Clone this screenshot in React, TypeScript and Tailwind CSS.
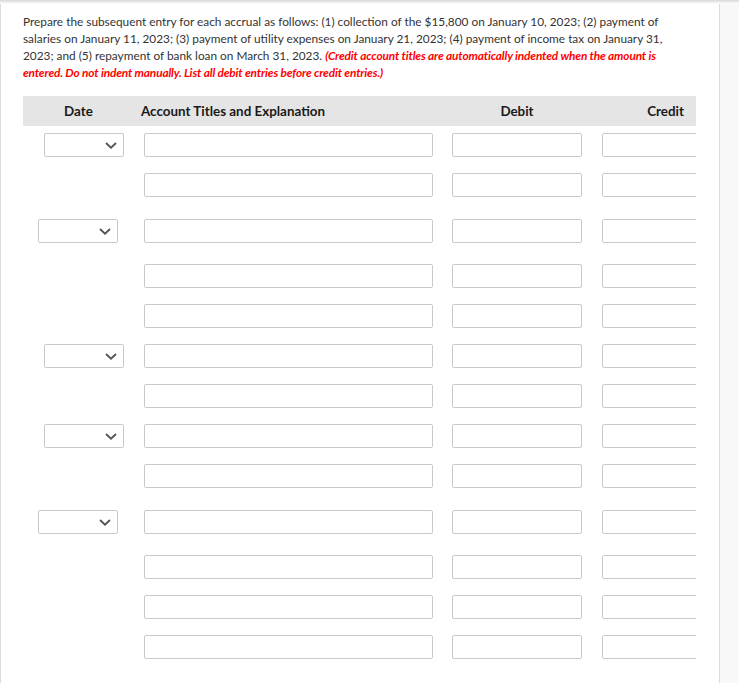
import React from "react";

type Row = { select?: "a" | "b"; extra?: boolean };

const rows: Row[] = [
  { select: "a" },
  {},
  { select: "b", extra: true },
  {},
  {},
  { select: "a" },
  {},
  { select: "a" },
  {},
  { select: "b", extra: true },
  {},
  {},
  {},
];

function Chevron() {
  return (
    <svg width="12" height="7" viewBox="0 0 12 7" fill="none" className="block">
      <path d="M1 1l5 4.6L11 1" stroke="#555" strokeWidth="1.9" />
    </svg>
  );
}

function Select() {
  return (
    <div className="flex h-6 w-[80px] items-center justify-end rounded-[2px] border border-[#c9c9c9] bg-white pr-[6px]">
      <Chevron />
    </div>
  );
}

function Input({ w }: { w: string }) {
  return <div className={`h-6 shrink-0 rounded-[2px] border border-[#c9c9c9] bg-white ${w}`} />;
}

export default function App() {
  return (
    <div
      className="min-h-[720px] bg-white text-[#333]"
      style={{ fontFamily: "Lato, 'Liberation Sans', sans-serif" }}
    >
      <div className="h-[4px] w-full bg-gradient-to-b from-[#d9d9d9] to-white" />
      <div className="flex">
        <div className="w-[720px] shrink-0 border-l border-r border-[#dcdcdc] pl-[22px] pr-[23px] pb-10">
          <p className="mt-[9px] pr-[10px] text-[11.83px] leading-[17px] text-[#333]">
            Prepare the subsequent entry for each accrual as follows: (1) collection of the $15,800 on January 10, 2023; (2) payment of salaries on January 11, 2023; (3) payment of utility expenses on January 21, 2023; (4) payment of income tax on January 31, 2023; and (5) repayment of bank loan on March 31, 2023.{" "}
            <span className="font-bold italic tracking-[-0.14px] text-[#f00]">
              (Credit account titles are automatically indented when the amount is entered. Do not indent manually. List all debit entries before credit entries.)
            </span>
          </p>

          <div className="mt-[15px] overflow-hidden">
            <div className="flex h-[30px] items-center bg-[#e5e5e5] text-[13.4px] font-bold text-[#1a1a1a]">
              <div className="w-[111px] shrink-0 text-center">Date</div>
              <div className="w-[308px] shrink-0 pl-[7px]">Account Titles and Explanation</div>
              <div className="w-[150px] shrink-0 text-center">Debit</div>
              <div className="flex-1 pr-[12px] text-right">Credit</div>
            </div>

            <div className="pt-[7px]">
              {rows.map((r, i) => (
                <div
                  key={i}
                  className={`mb-4 flex items-center ${r.extra ? "pt-[6px] pb-[5px]" : ""}`}
                >
                  <div
                    className={`flex w-[111px] shrink-0 justify-end ${r.select === "b" ? "pr-[16px]" : "pr-[10px]"}`}
                  >
                    {r.select ? <Select /> : <div className="h-6" />}
                  </div>
                  <div className="w-[308px] shrink-0 pl-[10px]">
                    <Input w="w-[289px]" />
                  </div>
                  <div className="w-[150px] shrink-0 pl-[10px]">
                    <Input w="w-[130px]" />
                  </div>
                  <div className="flex flex-1 overflow-hidden pl-[10px]">
                    <Input w="w-[130px]" />
                  </div>
                </div>
              ))}
            </div>
          </div>
        </div>
        <div className="flex-1 bg-[#f8f8f8]" />
      </div>
    </div>
  );
}
